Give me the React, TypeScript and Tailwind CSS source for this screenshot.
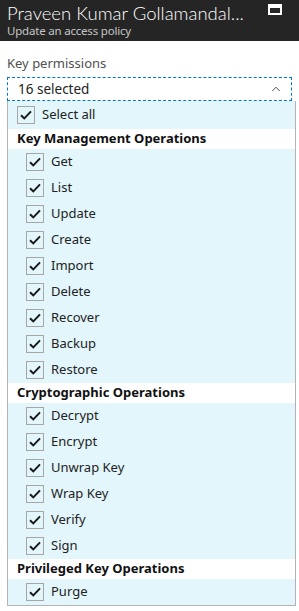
import { ChevronUp } from "lucide-react";

const groups = [
  {
    title: "Key Management Operations",
    items: ["Get", "List", "Update", "Create", "Import", "Delete", "Recover", "Backup", "Restore"],
  },
  {
    title: "Cryptographic Operations",
    items: ["Decrypt", "Encrypt", "Unwrap Key", "Wrap Key", "Verify", "Sign"],
  },
  {
    title: "Privileged Key Operations",
    items: ["Purge"],
  },
];

const Check = () => (
  <span className="w-[18px] h-[18px] border border-[#a6a6a6] flex items-center justify-center shrink-0">
    <svg width="12" height="10" viewBox="0 0 12 10">
      <path d="M1 5.2 L4.3 8.4 L11 1.4" fill="none" stroke="#1a1a1a" strokeWidth="2" />
    </svg>
  </span>
);

const App = () => {
  return (
    <div className="w-[299px] h-[611px] bg-white overflow-hidden font-['Noto_Sans',sans-serif]">
      {/* header */}
      <div className="bg-[#252525] h-[41px] pl-[7px] flex justify-between">
        <div className="pt-[2px] whitespace-nowrap">
          <div className="text-white text-[18.5px] font-light leading-[22px] font-['Lato',sans-serif]">
            Praveen Kumar Gollamandal...
          </div>
          <div className="text-[#c6c6c6] text-[11.5px] leading-[14px] tracking-[-0.2px]">Update an access policy</div>
        </div>
        <div className="mt-[4px] mr-[17px] w-[14px] h-[11px] border-2 border-t-[4px] border-white shrink-0"></div>
      </div>

      <div className="px-[7px] pt-[13px]">
        <div className="text-[#505050] text-[13px] leading-[18px] mb-[5px]">Key permissions</div>
        <div className="h-[24px] border border-dashed border-[#0078d7] flex items-center justify-between pl-[10px] pr-[8px]">
          <span className="text-[#222] text-[13.5px]">16 selected</span>
          <ChevronUp size={14} strokeWidth={1.5} color="#333" />
        </div>
        <div className="border-x border-b border-[#b3b3b3] w-[289px]">
          <div className="h-[28px] bg-[#e2f6fc] flex items-center gap-[7px] pl-[9px]">
            <Check />
            <span className="text-[#222] text-[13px]">Select all</span>
          </div>
          {groups.map((g) => (
            <div key={g.title}>
              <div className="h-[20px] bg-white flex items-center pl-[9px] text-[13px] font-bold text-[#111]">
                {g.title}
              </div>
              {g.items.map((it) => (
                <div key={it} className="h-[26px] bg-[#e2f6fc] flex items-center gap-[7px] pl-[18px]">
                  <Check />
                  <span className="text-[#222] text-[13px]">{it}</span>
                </div>
              ))}
            </div>
          ))}
        </div>
      </div>
    </div>
  );
};

export default App;
